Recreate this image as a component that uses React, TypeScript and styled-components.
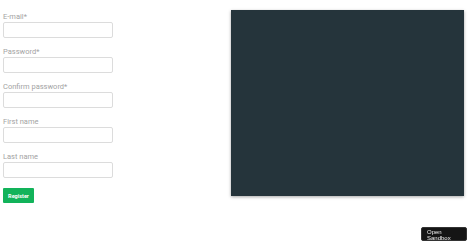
import React from 'react'
import styled, { createGlobalStyle } from 'styled-components'

const Global = createGlobalStyle`
  html, body { margin: 0; padding: 0; background: #fff; }
  body { font-family: Roboto, "Liberation Sans", sans-serif; }
`

const Page = styled.div({
  display: 'flex',
  alignItems: 'flex-start',
  padding: '10px 10px 0 3px',
})

const Form = styled.form({
  display: 'flex',
  flexDirection: 'column',
  width: 110,
  paddingTop: 1,
})

const Field = styled.div({
  display: 'flex',
  flexDirection: 'column',
  marginBottom: 8,
})

const Label = styled.label({
  fontSize: 7.5,
  lineHeight: '11px',
  color: '#a3a3a3',
})

const Input = styled.input({
  boxSizing: 'border-box',
  width: 110,
  height: 16,
  border: '1px solid #dcdcdc',
  borderRadius: 2,
  padding: 0,
  outline: 'none',
})

const Button = styled.button({
  marginTop: 2,
  alignSelf: 'flex-start',
  width: 31,
  height: 15,
  padding: 0,
  border: 'none',
  borderRadius: 1,
  background: '#12b35a',
  color: '#fff',
  fontFamily: 'Roboto, sans-serif',
  fontWeight: 700,
  fontSize: 5.5,
})

const Preview = styled.div({
  marginLeft: 118,
  width: 233,
  height: 186,
  background: '#25343b',
  boxShadow: '0 1px 3px rgba(0,0,0,0.35)',
})

const SandboxBadge = styled.div({
  position: 'fixed',
  right: 7,
  bottom: 7,
  width: 46,
  height: 14,
  boxSizing: 'border-box',
  padding: '1px 5px',
  background: '#151515',
  border: '1px solid #333',
  borderRadius: 2,
  color: '#eee',
  fontFamily: '"Liberation Sans", sans-serif',
  fontSize: 6,
  lineHeight: '6px',
})

const fields = [
  { label: 'E-mail*', type: 'email' },
  { label: 'Password*', type: 'password' },
  { label: 'Confirm password*', type: 'password' },
  { label: 'First name', type: 'text' },
  { label: 'Last name', type: 'text' },
]

const App = () => (
  <>
    <Global />
    <Page>
      <Form onSubmit={(e) => e.preventDefault()}>
        {fields.map((f) => (
          <Field key={f.label}>
            <Label>{f.label}</Label>
            <Input type={f.type} />
          </Field>
        ))}
        <Button type="submit">Register</Button>
      </Form>
      <Preview />
    </Page>
    <SandboxBadge>
      Open
      <br />
      Sandbox
    </SandboxBadge>
  </>
)

export default App
